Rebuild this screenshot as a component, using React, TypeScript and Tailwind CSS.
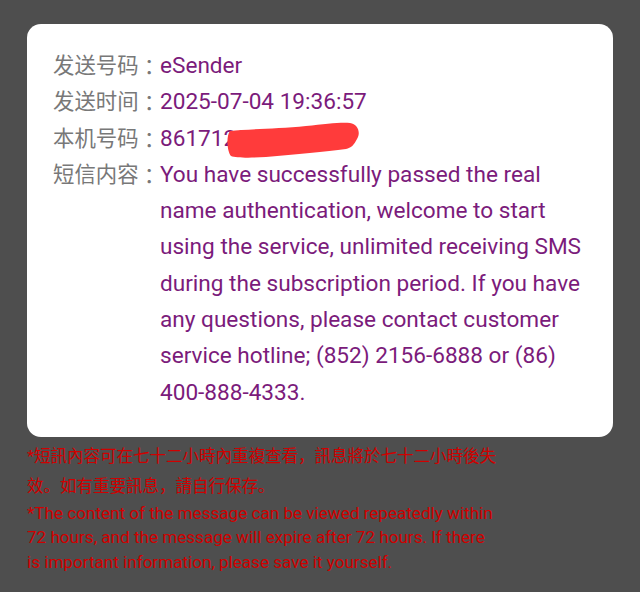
const LABEL = 'text-[#787878]';
const VALUE = 'text-[#7b1b7b]';

const rows: { label: string; value: React.ReactNode }[] = [
  { label: '发送号码', value: 'eSender' },
  { label: '发送时间', value: '2025-07-04 19:36:57' },
  {
    label: '本机号码',
    value: (
      <span className="relative inline-block">
        86171234567
        <svg
          className="absolute left-[66px] top-0"
          width="136"
          height="40"
          viewBox="0 0 136 40"
        >
          <path
            d="M4 10 C20 8, 50 8, 80 5 C100 3, 115 1, 124 2 C132 3, 135 12, 131 18 C128 24, 125 27, 120 28 C100 31, 70 33, 40 36 C25 37, 10 37, 5 35 C1 30, 0 15, 4 10 Z"
            fill="#ff3b3b"
          />
        </svg>
      </span>
    ),
  },
  {
    label: '短信内容',
    value:
      'You have successfully passed the real name authentication, welcome to start using the service, unlimited receiving SMS during the subscription period. If you have any questions, please contact customer service hotline; (852) 2156-6888 or (86) 400-888-4333.',
  },
];

export default function App() {
  return (
    <div
      className="w-[640px] h-[592px] bg-[#4e4e4e] pt-6 px-[27px] overflow-hidden"
      style={{ fontFamily: 'Roboto, "Noto Sans CJK SC", sans-serif' }}
    >
      <div className="bg-white rounded-[14px] pl-[26px] pr-[26px] pt-6 pb-[26px]">
        {rows.map((r) => (
          <div key={r.label} className="flex leading-[36.3px]">
            <span className={`w-[107px] shrink-0 flex whitespace-nowrap text-[21.4px] ${LABEL}`}>
              {r.label}
              <span
                className="flex-1 text-center pr-[3px]"
                style={{ fontFamily: '"Noto Sans CJK TC", sans-serif' }}
              >
                ：
              </span>
            </span>
            <span className={`text-[22.6px] ${VALUE}`}>{r.value}</span>
          </div>
        ))}
      </div>
      <div className="mt-[5px] w-[474px] text-[#d00000]">
        <p className="leading-[30px] text-[16.5px]">
          *短訊內容可在七十二小時內重複查看，訊息將於七十二小時後失效。如有重要訊息，請自行保存。
        </p>
        <p className="leading-[24.5px] -mt-px text-[17.1px]">
          *The content of the message can be viewed repeatedly within 72 hours, and the message will expire after 72 hours. If there is important information, please save it yourself.
        </p>
      </div>
    </div>
  );
}
